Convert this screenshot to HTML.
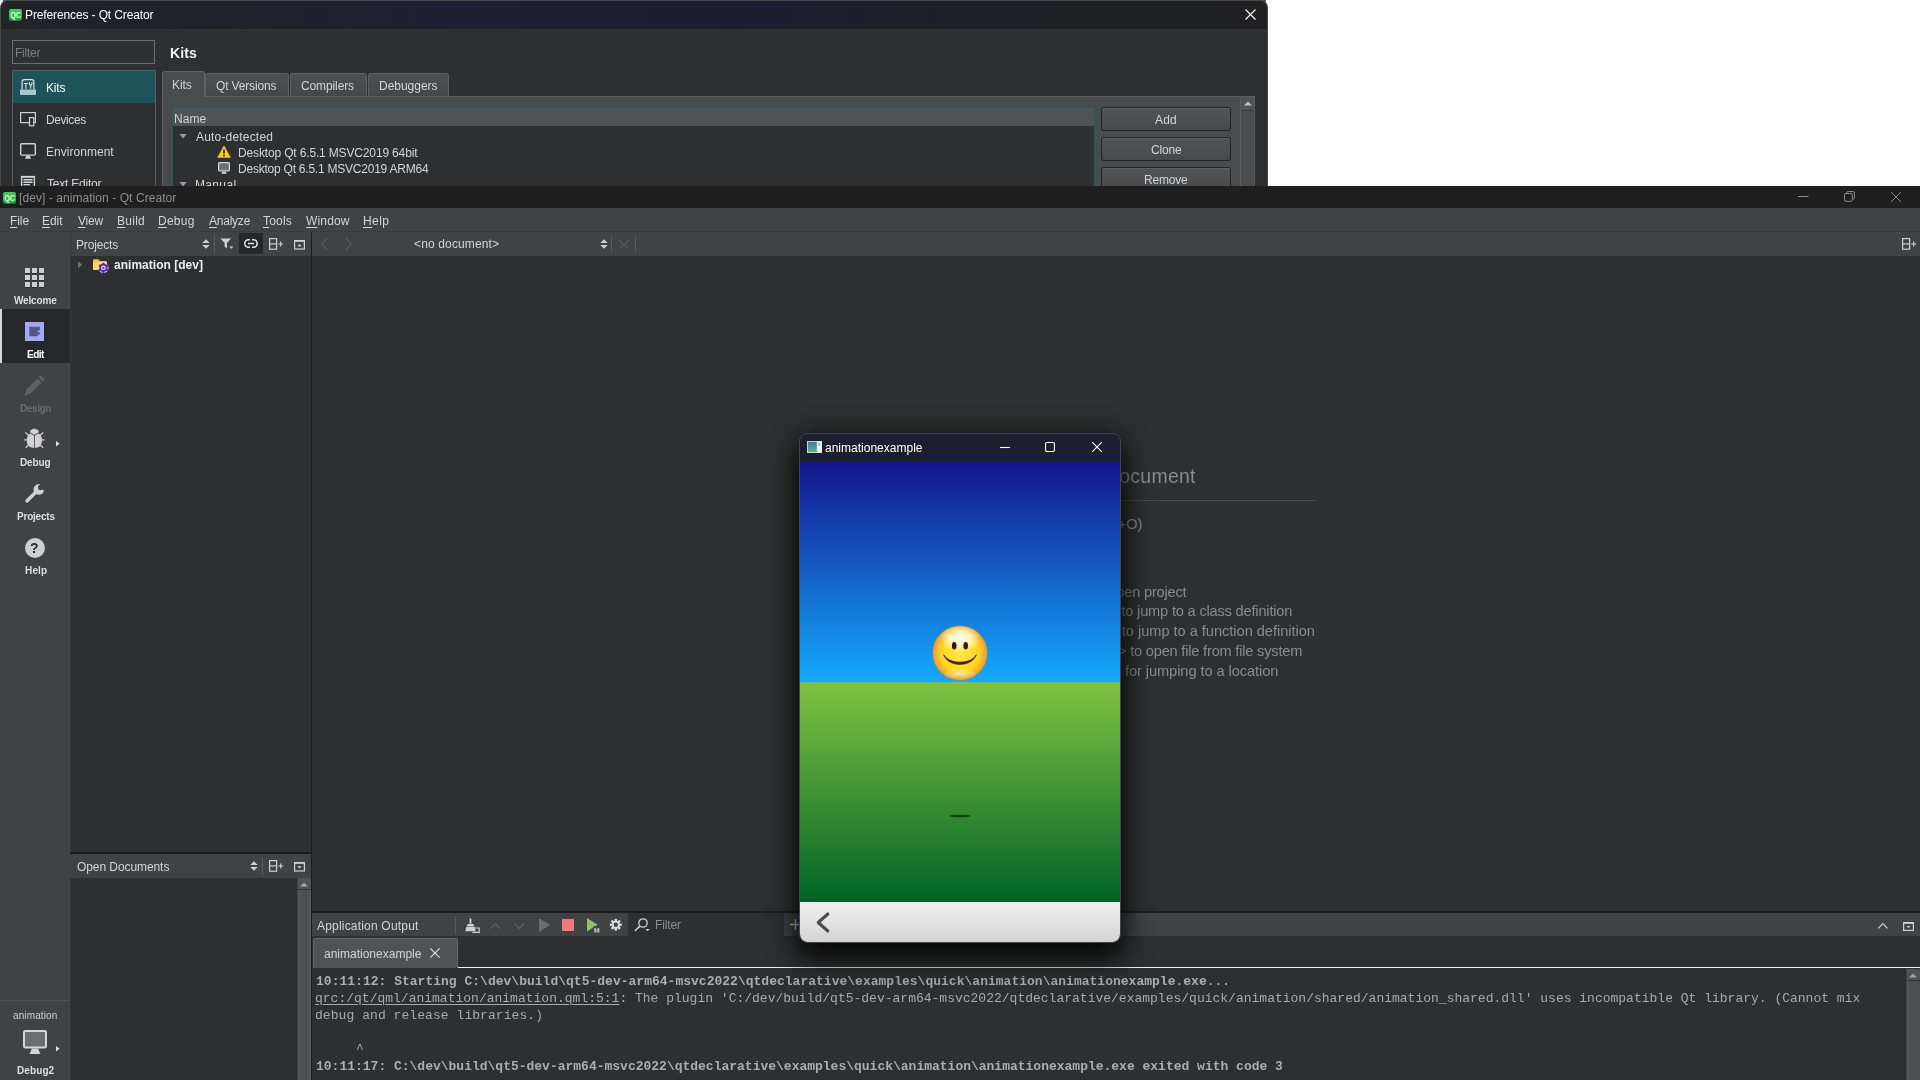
<!DOCTYPE html>
<html><head><meta charset="utf-8"><title>Qt Creator</title>
<style>
*{box-sizing:border-box;margin:0;padding:0}
html,body{width:1920px;height:1080px;overflow:hidden;background:#fff}
body{font-family:"Liberation Sans", sans-serif;font-size:12px;color:#d4d4d4;position:relative}
.a{position:absolute}
.t{position:absolute;white-space:pre;line-height:16px;height:16px;will-change:transform}
svg{position:absolute;overflow:visible}
u{text-decoration:underline;text-underline-offset:1.5px;text-decoration-thickness:1px}
</style></head><body>
<div class="a" style="left:0px;top:0px;width:1266px;height:2px;background:#4b4b4c;"></div>
<div class="a" style="left:0px;top:0px;width:3px;height:3px;background:#e8e8e8;"></div>
<div class="a" style="left:0px;top:0px;width:1268px;height:190px;background:#47484a;border-radius:8px 8px 0 0"></div>
<div class="a" style="left:1px;top:1px;width:1266px;height:189px;background:#2e2f30;border-radius:7px 7px 0 0"></div>
<div class="a" style="left:1px;top:1px;width:1266px;height:28px;background:linear-gradient(90deg,#222327 0,#1f2129 15%,#1b1f32 42%,#1b1e30 58%,#1e2025 80%,#202021 100%);border-radius:7px 7px 0 0"></div>
<div class="a" style="left:9px;top:9px;width:13px;height:11px;background:linear-gradient(#41cd52,#2aa840);border-radius:2px;box-shadow:0 1px 0 #17802b"></div>
<svg style="left:9px;top:9px" width="13" height="11" viewBox="0 0 13 11"><text x="1.2" y="9.2" font-family="Liberation Sans, sans-serif" font-weight="bold" font-size="9.6" textLength="10.8" lengthAdjust="spacingAndGlyphs" fill="#dcffe2">QC</text></svg>
<div class="t" style="left:24.80px;top:7.00px;font-size:12px;color:#ffffff;letter-spacing:-0.122px;">Preferences - Qt Creator</div>
<svg style="left:1245px;top:9px" width="11" height="11" viewBox="0 0 11 11"><path d="M0.5 0.5L10.5 10.5M10.5 0.5L0.5 10.5" stroke="#fff" stroke-width="1.1" fill="none"/></svg>
<div class="a" style="left:12px;top:40px;width:143px;height:24px;background:#6c6d6e;"></div>
<div class="a" style="left:13px;top:41px;width:141px;height:22px;background:#2e2f30;"></div>
<div class="t" style="left:14.80px;top:45.00px;font-size:12px;color:#7b7c7d;letter-spacing:-0.240px;">Filter</div>
<div class="a" style="left:12px;top:70px;width:144px;height:125px;background:#5b5c5e;"></div>
<div class="a" style="left:13px;top:71px;width:142px;height:124px;background:#2e2f30;"></div>
<div class="a" style="left:13px;top:71px;width:142px;height:32px;background:#1d545c;"></div>
<div class="t" style="left:45.70px;top:80.00px;font-size:12px;color:#ffffff;letter-spacing:-0.167px;">Kits</div>
<div class="t" style="left:45.70px;top:112.00px;font-size:12px;color:#d4d4d4;letter-spacing:-0.417px;">Devices</div>
<div class="t" style="left:45.70px;top:144.00px;font-size:12px;color:#d4d4d4;letter-spacing:0.030px;">Environment</div>
<div class="t" style="left:46.70px;top:176.00px;font-size:12px;color:#d4d4d4;letter-spacing:-0.220px;">Text Editor</div>
<svg style="left:20px;top:79px" width="16" height="16" viewBox="0 0 16 16"><rect x="0" y="10.5" width="16" height="5.5" fill="#a9c3c7"/><path d="M2.1 10.5V2.8a2.2 2.2 0 0 1 2.2-2.2h7.4a2.2 2.2 0 0 1 2.2 2.2v7.7" fill="none" stroke="#d5e6e8" stroke-width="1.2"/><path d="M3.9 4.5h4M5.9 4.5v5.2M9.4 3.1v1.7a1.3 1.3 0 0 0 2.6 0v-1.7M10.7 6.2v3.5" fill="none" stroke="#d5e6e8" stroke-width="1.1"/></svg>
<svg style="left:20px;top:112px" width="16" height="15" viewBox="0 0 16 15"><rect x="0.6" y="0.6" width="14.8" height="10" fill="none" stroke="#d0d0d0" stroke-width="1.2"/><rect x="9.5" y="5.6" width="4.3" height="8.2" fill="#2e2f30" stroke="#d0d0d0" stroke-width="1.2"/></svg>
<svg style="left:20px;top:143px" width="16" height="17" viewBox="0 0 16 17"><rect x="0.7" y="0.7" width="14.6" height="11.4" rx="1" fill="none" stroke="#d0d0d0" stroke-width="1.4"/><path d="M6.3 12.5h3.4l1.3 3.3h-6z" fill="#d0d0d0"/></svg>
<svg style="left:21px;top:176px" width="14" height="13" viewBox="0 0 14 13"><rect x="0.6" y="0.6" width="12.8" height="11" fill="none" stroke="#d6d6d6" stroke-width="1.3"/><path d="M0 0.8h14" stroke="#d6d6d6" stroke-width="1.8"/><path d="M2.4 3.8h9.2M2.4 6.2h9.2M2.4 8.6h6.5" stroke="#d6d6d6" stroke-width="1.4"/></svg>
<div class="t" style="left:169.60px;top:45.00px;font-size:14px;font-weight:bold;color:#f2f2f2;letter-spacing:0.133px;">Kits</div>
<div class="a" style="left:162px;top:96px;width:1093px;height:100px;background:#5c5d5f;"></div>
<div class="a" style="left:163px;top:97px;width:1091px;height:100px;background:#4a4b4d;"></div>
<div class="a" style="left:162px;top:71px;width:43px;height:26px;background:#626365;border-radius:3px 3px 0 0"></div>
<div class="a" style="left:163px;top:72px;width:41px;height:26px;background:#4a4b4d;border-radius:2px 2px 0 0"></div>
<div class="a" style="left:205px;top:73px;width:84px;height:23px;background:#5e5f61;border-radius:3px 3px 0 0"></div>
<div class="a" style="left:206px;top:74px;width:82px;height:22px;background:linear-gradient(#4e4f51,#454648);border-radius:2px 2px 0 0"></div>
<div class="a" style="left:290px;top:73px;width:77px;height:23px;background:#5e5f61;border-radius:3px 3px 0 0"></div>
<div class="a" style="left:291px;top:74px;width:75px;height:22px;background:linear-gradient(#4e4f51,#454648);border-radius:2px 2px 0 0"></div>
<div class="a" style="left:368px;top:73px;width:81px;height:23px;background:#5e5f61;border-radius:3px 3px 0 0"></div>
<div class="a" style="left:369px;top:74px;width:79px;height:22px;background:linear-gradient(#4e4f51,#454648);border-radius:2px 2px 0 0"></div>
<div class="t" style="left:172.30px;top:77.00px;font-size:12px;color:#d4d4d4;letter-spacing:-0.100px;">Kits</div>
<div class="t" style="left:216.30px;top:78.00px;font-size:12px;color:#d4d4d4;letter-spacing:-0.160px;">Qt Versions</div>
<div class="t" style="left:301.40px;top:78.00px;font-size:12px;color:#d4d4d4;letter-spacing:-0.112px;">Compilers</div>
<div class="t" style="left:378.50px;top:78.00px;font-size:12px;color:#d4d4d4;letter-spacing:-0.025px;">Debuggers</div>
<div class="a" style="left:172px;top:107px;width:923px;height:90px;background:#1f5c64;"></div>
<div class="a" style="left:173px;top:108px;width:921px;height:90px;background:#2e2f30;"></div>
<div class="a" style="left:173px;top:108px;width:921px;height:18px;background:#515254;"></div>
<div class="t" style="left:174.30px;top:111.00px;font-size:12px;color:#d4d4d4;letter-spacing:0.033px;">Name</div>
<div class="t" style="left:196.30px;top:129.00px;font-size:12px;color:#d4d4d4;letter-spacing:0.183px;">Auto-detected</div>
<div class="t" style="left:237.60px;top:145.00px;font-size:12px;color:#d4d4d4;letter-spacing:-0.153px;">Desktop Qt 6.5.1 MSVC2019 64bit</div>
<div class="t" style="left:237.60px;top:161.00px;font-size:12px;color:#d4d4d4;letter-spacing:-0.227px;">Desktop Qt 6.5.1 MSVC2019 ARM64</div>
<div class="t" style="left:195.30px;top:177.00px;font-size:12px;color:#d4d4d4;letter-spacing:0.340px;">Manual</div>
<svg style="left:179px;top:134px" width="8" height="5" viewBox="0 0 8 5"><path d="M0.3 0h7.4L4 4.6z" fill="#9a9b9c"/></svg>
<svg style="left:179px;top:182px" width="8" height="5" viewBox="0 0 8 5"><path d="M0.3 0h7.4L4 4.6z" fill="#9a9b9c"/></svg>
<svg style="left:217px;top:145px" width="14" height="13" viewBox="0 0 14 13"><path d="M7 0.8L13.4 12.4H0.6z" fill="#f5cf2e" stroke="#e0b400" stroke-width="0.8" stroke-linejoin="round"/><path d="M7 4.4v4.2" stroke="#33260a" stroke-width="1.7"/><circle cx="7" cy="10.5" r="0.95" fill="#33260a"/></svg>
<svg style="left:218px;top:162px" width="12" height="12" viewBox="0 0 12 12"><rect x="0.6" y="0.6" width="10.8" height="8.2" rx="0.8" fill="#6e6f71" stroke="#d2d2d2" stroke-width="1.2"/><path d="M4.6 9.4h2.8l1.4 2.4h-5.6z" fill="#d2d2d2"/></svg>
<div class="a" style="left:1101px;top:107px;width:130px;height:24px;background:#242526;border-radius:3px"></div>
<div class="a" style="left:1102px;top:108px;width:128px;height:22px;background:linear-gradient(#525355,#48494b);border-radius:2px;box-shadow:inset 0 1px 0 #5f6062"></div>
<div class="t" style="left:1155.30px;top:112.00px;font-size:12px;color:#d4d4d4;letter-spacing:0.200px;">Add</div>
<div class="a" style="left:1101px;top:137px;width:130px;height:24px;background:#242526;border-radius:3px"></div>
<div class="a" style="left:1102px;top:138px;width:128px;height:22px;background:linear-gradient(#525355,#48494b);border-radius:2px;box-shadow:inset 0 1px 0 #5f6062"></div>
<div class="t" style="left:1150.80px;top:142.00px;font-size:12px;color:#d4d4d4;letter-spacing:-0.200px;">Clone</div>
<div class="a" style="left:1101px;top:167px;width:130px;height:24px;background:#242526;border-radius:3px"></div>
<div class="a" style="left:1102px;top:168px;width:128px;height:22px;background:linear-gradient(#525355,#48494b);border-radius:2px;box-shadow:inset 0 1px 0 #5f6062"></div>
<div class="t" style="left:1144.00px;top:172.00px;font-size:12px;color:#d4d4d4;letter-spacing:-0.200px;">Remove</div>
<div class="a" style="left:1240px;top:97px;width:15px;height:100px;background:#4c4d4f;border-left:1px solid #5c5d5f;border-right:1px solid #5a5b5d"></div>
<div class="a" style="left:1241px;top:97px;width:13px;height:14px;background:#525355;border-bottom:1px solid #38393b"></div>
<svg style="left:1243.5px;top:101px" width="8" height="5" viewBox="0 0 8 5"><path d="M0 4.6L4 0.4L8 4.6z" fill="#c2c2c2"/></svg>
<div class="a" style="left:0px;top:186px;width:1920px;height:894px;background:#2e2f30;"></div>
<div class="a" style="left:0px;top:186px;width:1920px;height:22px;background:#1f1f1f;"></div>
<div class="a" style="left:3px;top:192px;width:13px;height:11px;background:linear-gradient(#41cd52,#2aa840);border-radius:2px;box-shadow:0 1px 0 #17802b"></div>
<svg style="left:3px;top:192px" width="13" height="11" viewBox="0 0 13 11"><text x="1.2" y="9.2" font-family="Liberation Sans, sans-serif" font-weight="bold" font-size="9.6" textLength="10.8" lengthAdjust="spacingAndGlyphs" fill="#dcffe2">QC</text></svg>
<div class="t" style="left:18.80px;top:190.00px;font-size:12px;color:#8d8d8d;letter-spacing:0.066px;">[dev] - animation - Qt Creator</div>
<svg style="left:1798px;top:196px" width="11" height="1" viewBox="0 0 11 1"><path d="M0 0.5h10.5" stroke="#8a8a8a" stroke-width="1"/></svg>
<svg style="left:1844px;top:191px" width="11" height="11" viewBox="0 0 11 11"><rect x="0.5" y="2.5" width="7.8" height="7.8" rx="1.6" fill="none" stroke="#8a8a8a" stroke-width="1"/><path d="M2.6 2.4v-0.3a1.6 1.6 0 0 1 1.6-1.6h4.6a1.6 1.6 0 0 1 1.6 1.6v4.6a1.6 1.6 0 0 1-1.6 1.6h-0.4" fill="none" stroke="#8a8a8a" stroke-width="1"/></svg>
<svg style="left:1890.5px;top:191.5px" width="10" height="10" viewBox="0 0 10 10"><path d="M0 0L10 10M10 0L0 10" stroke="#8a8a8a" stroke-width="1" fill="none"/></svg>
<div class="a" style="left:0px;top:208px;width:1920px;height:24px;background:#404244;"></div>
<div class="a" style="left:0px;top:231px;width:1920px;height:1px;background:#3a3b3d;"></div>
<div class="t" style="left:10.00px;top:213.00px;font-size:12px;color:#d4d4d4;letter-spacing:-0.067px;"><u>F</u>ile</div>
<div class="t" style="left:42.30px;top:213.00px;font-size:12px;color:#d4d4d4;letter-spacing:-0.067px;"><u>E</u>dit</div>
<div class="t" style="left:78.10px;top:213.00px;font-size:12px;color:#d4d4d4;letter-spacing:-0.200px;"><u>V</u>iew</div>
<div class="t" style="left:117.30px;top:213.00px;font-size:12px;color:#d4d4d4;letter-spacing:0.275px;"><u>B</u>uild</div>
<div class="t" style="left:158.40px;top:213.00px;font-size:12px;color:#d4d4d4;letter-spacing:0.250px;"><u>D</u>ebug</div>
<div class="t" style="left:209.00px;top:213.00px;font-size:12px;color:#d4d4d4;letter-spacing:-0.233px;"><u>A</u>nalyze</div>
<div class="t" style="left:263.00px;top:213.00px;font-size:12px;color:#d4d4d4;letter-spacing:0.175px;"><u>T</u>ools</div>
<div class="t" style="left:305.80px;top:213.00px;font-size:12px;color:#d4d4d4;letter-spacing:0.160px;"><u>W</u>indow</div>
<div class="t" style="left:363.20px;top:213.00px;font-size:12px;color:#d4d4d4;letter-spacing:0.433px;"><u>H</u>elp</div>
<div class="a" style="left:0px;top:232px;width:1920px;height:24px;background:#404244;"></div>
<div class="a" style="left:0px;top:232px;width:70px;height:848px;background:#404244;"></div>
<div class="a" style="left:70px;top:232px;width:1px;height:848px;background:#37383a;"></div>
<div class="a" style="left:0px;top:309px;width:70px;height:54px;background:#262728;"></div>
<div class="a" style="left:0px;top:309px;width:2px;height:54px;background:#d6d6d6;"></div>
<svg style="left:25px;top:267.5px" width="19" height="19" viewBox="0 0 19 19"><g transform="translate(0,1)" opacity="0.5"><rect x="0" y="0" width="5" height="5" fill="#1a1a1a"/><rect x="0" y="7" width="5" height="5" fill="#1a1a1a"/><rect x="0" y="14" width="5" height="5" fill="#1a1a1a"/><rect x="7" y="0" width="5" height="5" fill="#1a1a1a"/><rect x="7" y="7" width="5" height="5" fill="#1a1a1a"/><rect x="7" y="14" width="5" height="5" fill="#1a1a1a"/><rect x="14" y="0" width="5" height="5" fill="#1a1a1a"/><rect x="14" y="7" width="5" height="5" fill="#1a1a1a"/><rect x="14" y="14" width="5" height="5" fill="#1a1a1a"/></g><rect x="0" y="0" width="5" height="5" fill="#cfcfcf"/><rect x="0" y="7" width="5" height="5" fill="#cfcfcf"/><rect x="0" y="14" width="5" height="5" fill="#cfcfcf"/><rect x="7" y="0" width="5" height="5" fill="#cfcfcf"/><rect x="7" y="7" width="5" height="5" fill="#cfcfcf"/><rect x="7" y="14" width="5" height="5" fill="#cfcfcf"/><rect x="14" y="0" width="5" height="5" fill="#cfcfcf"/><rect x="14" y="7" width="5" height="5" fill="#cfcfcf"/><rect x="14" y="14" width="5" height="5" fill="#cfcfcf"/></svg>
<div class="t" style="left:13.50px;top:293.00px;font-size:10px;font-weight:bold;color:#dedede;letter-spacing:-0.167px;">Welcome</div>
<svg style="left:25px;top:321.5px" width="19" height="19" viewBox="0 0 19 19"><rect x="0" y="0" width="19" height="19" fill="#a2a8f5"/><path d="M4.3 4.8H14.8V8.6H12.8V10.3H14.8V12.4H12.8V14.2H4.3z" fill="#52578a"/></svg>
<div class="t" style="left:26.50px;top:347.00px;font-size:10px;font-weight:bold;color:#ffffff;letter-spacing:-0.500px;">Edit</div>
<svg style="left:24px;top:376px" width="20" height="20" viewBox="0 0 20 20"><path d="M0.6 19.4l1.6-5.6L13.6 2.4l4 4L6.2 17.8z" fill="#606163"/><path d="M14.6 1.4l1.2-1.2a1 1 0 0 1 1.4 0l2.6 2.6a1 1 0 0 1 0 1.4l-1.2 1.2z" fill="#606163"/></svg>
<div class="t" style="left:19.50px;top:401.00px;font-size:10px;font-weight:bold;color:#6b6c6e;letter-spacing:-0.400px;">Design</div>
<svg style="left:24px;top:428px" width="21" height="21" viewBox="0 0 21 21"><g stroke="#cfcfcf" stroke-width="1.3" fill="none"><path d="M4.6 7.2L1.4 4.6M2.9 11.8H0.2M4.4 17.2L1.6 19.8M16.2 7.2l3.2-2.6M17.9 11.8h2.7M16.4 17.2l2.8 2.6"/></g><path d="M10.4 0.8l3.9 1.7v2l-3.9 2-3.9-2v-2z" fill="#d2d2d2" stroke="#d2d2d2" stroke-width="0.6" stroke-linejoin="round"/><path d="M10 7.4L6.1 5.4C4.3 6.3 2.9 8.7 2.7 11.6C2.6 15.2 4 18.1 6.5 19.3L10 20.1z" fill="#d2d2d2"/><path d="M10.8 7.4l3.9-2c1.8 0.9 3.2 3.3 3.4 6.2c0.1 3.6-1.3 6.5-3.8 7.7l-3.5 0.8z" fill="#d2d2d2"/></svg>
<svg style="left:56px;top:441px" width="4" height="6" viewBox="0 0 4 6"><path d="M0 0l3.6 2.8L0 5.6z" fill="#e0e0e0"/></svg>
<div class="t" style="left:19.50px;top:455.00px;font-size:10px;font-weight:bold;color:#dedede;letter-spacing:-0.125px;">Debug</div>
<svg style="left:24px;top:483px" width="22" height="22" viewBox="0 0 22 22"><g opacity="0.45" transform="translate(0,1.2)"><path d="M3 18L13 8" stroke="#1a1a1a" stroke-width="3.7" stroke-linecap="round"/></g><path d="M3 18L13 8" stroke="#d0d0d0" stroke-width="3.7" stroke-linecap="round" fill="none"/><circle cx="14.8" cy="6.4" r="5.3" fill="#d0d0d0"/><circle cx="16.7" cy="4.5" r="2.7" fill="#404244"/><path d="M14.8 2.6l5.7 5.7 4-4-5.7-5.7z" fill="#404244"/></svg>
<div class="t" style="left:16.50px;top:509.00px;font-size:10px;font-weight:bold;color:#dedede;letter-spacing:-0.214px;">Projects</div>
<svg style="left:25px;top:538px" width="20" height="20" viewBox="0 0 20 20"><circle cx="10" cy="10" r="10" fill="#cfcfcf"/></svg>
<div class="t" style="left:30.20px;top:540.00px;font-size:14px;font-weight:bold;color:#2a2b2c;letter-spacing:0.400px;">?</div>
<div class="t" style="left:24.50px;top:563.00px;font-size:10px;font-weight:bold;color:#dedede;letter-spacing:0.167px;">Help</div>
<div class="a" style="left:0px;top:1000px;width:70px;height:1px;background:#505153;"></div>
<div class="t" style="left:13.00px;top:1008.00px;font-size:10px;color:#d0d0d0;letter-spacing:0.125px;">animation</div>
<svg style="left:23px;top:1030px" width="24" height="25" viewBox="0 0 24 25"><rect x="1" y="1" width="22" height="16.5" rx="1.2" fill="#6d6e70" stroke="#d6d6d6" stroke-width="2"/><path d="M9 18.5h6l2.5 5.5h-11z" fill="#d6d6d6"/></svg>
<svg style="left:56px;top:1046px" width="4" height="6" viewBox="0 0 4 6"><path d="M0 0l3.6 2.8L0 5.6z" fill="#e0e0e0"/></svg>
<div class="t" style="left:16.50px;top:1063.00px;font-size:10px;font-weight:bold;color:#dedede;letter-spacing:0.100px;">Debug2</div>
<div class="t" style="left:75.50px;top:237.00px;font-size:12px;color:#d4d4d4;letter-spacing:-0.171px;">Projects</div>
<svg style="left:202px;top:238.5px" width="8" height="10" viewBox="0 0 8 10"><path d="M0.3 3.9L4 0.2L7.7 3.9zM0.3 6.1L4 9.8L7.7 6.1z" fill="#d0d0d0"/></svg>
<div class="a" style="left:214px;top:235px;width:1px;height:18px;background:#58595b;"></div>
<svg style="left:220px;top:238px" width="14" height="12" viewBox="0 0 14 12"><path d="M0.4 0.4h10.6L7 5v5.2l-2.4-1.4V5z" fill="#d0d0d0"/><path d="M9.4 8.6h4L11.4 10.8z" fill="#d0d0d0"/></svg>
<div class="a" style="left:239px;top:233px;width:24px;height:21px;background:#262728;"></div>
<svg style="left:244px;top:239px" width="14" height="9" viewBox="0 0 14 9"><path d="M6 0.8H4.5a3.7 3.7 0 0 0 0 7.4H6M8 0.8h1.5a3.7 3.7 0 0 1 0 7.4H8M4 4.5h6" fill="none" stroke="#e4e4e4" stroke-width="1.5"/></svg>
<svg style="left:269px;top:238.2px" width="15" height="12" viewBox="0 0 15 12"><rect x="0.6" y="0.6" width="7" height="10.6" fill="none" stroke="#d0d0d0" stroke-width="1.2"/><path d="M0.6 5.9h7" stroke="#d0d0d0" stroke-width="1.2"/><path d="M9.2 6h5M11.7 3.5v5" stroke="#d0d0d0" stroke-width="1.2"/></svg>
<svg style="left:294px;top:240.3px" width="11" height="10" viewBox="0 0 11 10"><rect x="0.6" y="0.6" width="9.8" height="8.4" fill="none" stroke="#d0d0d0" stroke-width="1.2"/><path d="M0.6 1h9.8" stroke="#d0d0d0" stroke-width="1.6"/><path d="M3.3 6.2L5.5 4l2.2 2.2z" fill="#d0d0d0"/></svg>
<svg style="left:78px;top:261px" width="5" height="8" viewBox="0 0 5 8"><path d="M0 0.2L4.2 3.7L0 7.2z" fill="#707173"/></svg>
<svg style="left:93px;top:258.5px" width="15" height="13" viewBox="0 0 15 13"><path d="M0 1.2a1 1 0 0 1 1-1h4.2l1.6 1.8H13a1 1 0 0 1 1 1V10a1 1 0 0 1-1 1H1a1 1 0 0 1-1-1z" fill="#f3c544"/><path d="M0 3.4h14V10a1 1 0 0 1-1 1H1a1 1 0 0 1-1-1z" fill="#fbd866"/><circle cx="10.4" cy="8.8" r="5.2" fill="#e4d8ff" opacity="0.9"/><g transform="translate(10.4,8.8)" fill="#5b21c4"><rect x="-1.1" y="-5" width="2.2" height="2" transform="rotate(0)"/><rect x="-1.1" y="-5" width="2.2" height="2" transform="rotate(60)"/><rect x="-1.1" y="-5" width="2.2" height="2" transform="rotate(120)"/><rect x="-1.1" y="-5" width="2.2" height="2" transform="rotate(180)"/><rect x="-1.1" y="-5" width="2.2" height="2" transform="rotate(240)"/><rect x="-1.1" y="-5" width="2.2" height="2" transform="rotate(300)"/><circle r="4" /></g><circle cx="10.4" cy="8.8" r="2.3" fill="#f1eaff"/><circle cx="10.4" cy="8.8" r="1.1" fill="#5b21c4"/></svg>
<div class="t" style="left:114.20px;top:257.00px;font-size:12px;font-weight:bold;color:#ececec;letter-spacing:0.021px;">animation [dev]</div>
<div class="a" style="left:311px;top:232px;width:1px;height:848px;background:#1b1c1d;"></div>
<div class="a" style="left:70px;top:852px;width:241px;height:2px;background:#1b1c1d;"></div>
<div class="a" style="left:70px;top:854px;width:241px;height:24px;background:#404244;"></div>
<div class="t" style="left:76.50px;top:859.00px;font-size:12px;color:#d4d4d4;letter-spacing:-0.077px;">Open Documents</div>
<svg style="left:250px;top:860.5px" width="8" height="10" viewBox="0 0 8 10"><path d="M0.3 3.9L4 0.2L7.7 3.9zM0.3 6.1L4 9.8L7.7 6.1z" fill="#d0d0d0"/></svg>
<div class="a" style="left:262px;top:857px;width:1px;height:18px;background:#58595b;"></div>
<svg style="left:269px;top:860.3px" width="15" height="12" viewBox="0 0 15 12"><rect x="0.6" y="0.6" width="7" height="10.6" fill="none" stroke="#d0d0d0" stroke-width="1.2"/><path d="M0.6 5.9h7" stroke="#d0d0d0" stroke-width="1.2"/><path d="M9.2 6h5M11.7 3.5v5" stroke="#d0d0d0" stroke-width="1.2"/></svg>
<svg style="left:294px;top:862.2px" width="11" height="10" viewBox="0 0 11 10"><rect x="0.6" y="0.6" width="9.8" height="8.4" fill="none" stroke="#d0d0d0" stroke-width="1.2"/><path d="M0.6 1h9.8" stroke="#d0d0d0" stroke-width="1.6"/><path d="M3.3 4.2L5.5 6.4l2.2-2.2z" fill="#d0d0d0"/></svg>
<div class="a" style="left:297px;top:878px;width:14px;height:202px;background:linear-gradient(90deg,#2c2d2e 0,#58595b 8%,#4d4e50 30%,#4d4e50 80%,#5a5b5d 100%);"></div>
<div class="a" style="left:298px;top:878px;width:13px;height:12px;background:#515254;border-bottom:1px solid #343536"></div>
<svg style="left:300px;top:881.7px" width="8" height="5" viewBox="0 0 8 5"><path d="M0 4.6L4 0.4L8 4.6z" fill="#a2a3a4"/></svg>
<svg style="left:321px;top:237.5px" width="7" height="12" viewBox="0 0 7 12"><path d="M6.3 0.3L0.6 6l5.7 5.7" fill="none" stroke="#5c5d5f" stroke-width="1.2"/></svg>
<svg style="left:344.5px;top:237.5px" width="7" height="12" viewBox="0 0 7 12"><path d="M0.7 0.3L6.4 6l-5.7 5.7" fill="none" stroke="#5c5d5f" stroke-width="1.2"/></svg>
<div class="t" style="left:414.20px;top:236.00px;font-size:12px;color:#d4d4d4;letter-spacing:0.142px;">&lt;no document&gt;</div>
<svg style="left:599.5px;top:238.5px" width="8" height="10" viewBox="0 0 8 10"><path d="M0.3 3.9L4 0.2L7.7 3.9zM0.3 6.1L4 9.8L7.7 6.1z" fill="#d0d0d0"/></svg>
<div class="a" style="left:611px;top:235px;width:1px;height:18px;background:#58595b;"></div>
<svg style="left:619px;top:239.5px" width="10" height="9" viewBox="0 0 10 9"><path d="M0.3 0.3L9.7 8.7M9.7 0.3L0.3 8.7" stroke="#5c5d5f" stroke-width="1.1" fill="none"/></svg>
<div class="a" style="left:635px;top:235px;width:1px;height:18px;background:#58595b;"></div>
<svg style="left:1901.8px;top:238.2px" width="15" height="12" viewBox="0 0 15 12"><rect x="0.6" y="0.6" width="7" height="10.6" fill="none" stroke="#d0d0d0" stroke-width="1.2"/><path d="M0.6 5.9h7" stroke="#d0d0d0" stroke-width="1.2"/><path d="M9.2 6h5M11.7 3.5v5" stroke="#d0d0d0" stroke-width="1.2"/></svg>
<div class="a" style="left:312px;top:911px;width:1608px;height:2px;background:#1b1c1d;"></div>
<div class="a" style="left:312px;top:913px;width:1608px;height:24px;background:#404244;"></div>
<div class="a" style="left:312px;top:936px;width:1608px;height:1px;background:#2b2c2d;"></div>
<div class="a" style="left:628px;top:913px;width:156px;height:24px;background:#2e2f30;"></div>
<div class="t" style="left:317.00px;top:918.00px;font-size:12px;color:#d4d4d4;letter-spacing:0.194px;">Application Output</div>
<div class="a" style="left:455px;top:916px;width:1px;height:18px;background:#58595b;"></div>
<svg style="left:465px;top:917.5px" width="15" height="15" viewBox="0 0 15 15"><path d="M4.6 0.4h1.8v5.2h-1.8z" fill="#d0d0d0"/><path d="M2.6 6h5.8l0.6 2h-7z" fill="#d0d0d0"/><path d="M1.6 8.6h7.8l1.4 4.6H0.2z" fill="#d0d0d0"/><path d="M8.4 10h5.8v4.4H7.4" fill="none" stroke="#d0d0d0" stroke-width="1.2"/></svg>
<svg style="left:490.4px;top:922.6px" width="11" height="6" viewBox="0 0 11 6"><path d="M0.4 5.6L5.2 0.7L10 5.6" fill="none" stroke="#606163" stroke-width="1.2"/></svg>
<svg style="left:513.8px;top:922.6px" width="11" height="6" viewBox="0 0 11 6"><path d="M0.4 0.4L5.2 5.3L10 0.4" fill="none" stroke="#606163" stroke-width="1.2"/></svg>
<svg style="left:539px;top:918px" width="11" height="14" viewBox="0 0 11 14"><path d="M0 0L11 7L0 14z" fill="#6c6d6f"/></svg>
<div class="a" style="left:562px;top:919px;width:12px;height:12px;background:#ee7a7a;"></div>
<svg style="left:587px;top:918px" width="13" height="15" viewBox="0 0 13 15"><path d="M0 0L10.6 6.8L0 13.6z" fill="#8fc45e"/><rect x="6.2" y="8.4" width="6.6" height="6.2" fill="#404244"/><path d="M7.2 14.4v-3.6a1.2 1.2 0 0 1 2.2 0v3.6zM10.2 14.4v-3.6a1.2 1.2 0 0 1 2.2 0v3.6z" fill="#b9babb"/></svg>
<svg style="left:610px;top:919px" width="12" height="12" viewBox="0 0 12 12"><g transform="translate(5.8,5.8)" fill="#dadada"><rect x="-1.2" y="-5.9" width="2.4" height="3" transform="rotate(0)" /><rect x="-1.2" y="-5.9" width="2.4" height="3" transform="rotate(45)" /><rect x="-1.2" y="-5.9" width="2.4" height="3" transform="rotate(90)" /><rect x="-1.2" y="-5.9" width="2.4" height="3" transform="rotate(135)" /><rect x="-1.2" y="-5.9" width="2.4" height="3" transform="rotate(180)" /><rect x="-1.2" y="-5.9" width="2.4" height="3" transform="rotate(225)" /><rect x="-1.2" y="-5.9" width="2.4" height="3" transform="rotate(270)" /><rect x="-1.2" y="-5.9" width="2.4" height="3" transform="rotate(315)" /></g><circle cx="5.8" cy="5.8" r="3.1" fill="none" stroke="#dadada" stroke-width="1.8"/></svg>
<svg style="left:634px;top:918px" width="16" height="14" viewBox="0 0 16 14"><circle cx="9" cy="5" r="4.2" fill="none" stroke="#d0d0d0" stroke-width="1.3"/><path d="M6 8.2L0.8 13" stroke="#d0d0d0" stroke-width="1.6"/><path d="M11.6 11h4l-2 2.2z" fill="#d0d0d0"/></svg>
<div class="t" style="left:654.60px;top:917.00px;font-size:12px;color:#8b8c8d;letter-spacing:-0.120px;">Filter</div>
<svg style="left:790px;top:919px" width="11" height="11" viewBox="0 0 11 11"><path d="M0 5.5h11M5.5 0v11" stroke="#c2c2c2" stroke-width="1.5"/></svg>
<svg style="left:1878.4px;top:923px" width="10" height="6" viewBox="0 0 10 6"><path d="M0.3 5.3L4.9 0.6L9.5 5.3" fill="none" stroke="#d0d0d0" stroke-width="1.2"/></svg>
<svg style="left:1903px;top:921.5px" width="11" height="9" viewBox="0 0 11 9"><rect x="0.6" y="0.6" width="9.8" height="7.8" fill="none" stroke="#d0d0d0" stroke-width="1.2"/><path d="M0.6 1h9.8" stroke="#d0d0d0" stroke-width="1.6"/><path d="M3.5 4L5.5 6l2-2z" fill="#d0d0d0"/></svg>
<div class="a" style="left:313px;top:938px;width:145px;height:30px;background:#636466;border-radius:2px 2px 0 0"></div>
<div class="a" style="left:314px;top:939px;width:143px;height:29px;background:#515254;border-radius:1px 1px 0 0"></div>
<div class="t" style="left:324.30px;top:946.00px;font-size:12px;color:#d4d4d4;letter-spacing:0.000px;">animationexample</div>
<svg style="left:429.5px;top:948px" width="10" height="10" viewBox="0 0 10 10"><path d="M0.3 0.3L9.7 9.7M9.7 0.3L0.3 9.7" stroke="#e0e0e0" stroke-width="1.1" fill="none"/></svg>
<div class="a" style="left:458px;top:967px;width:1462px;height:1px;background:#f2f2f2;"></div>
<div class="a" style="left:1906px;top:969px;width:14px;height:111px;background:linear-gradient(90deg,#2c2d2e 0,#58595b 8%,#4d4e50 30%,#4d4e50 100%);"></div>
<div class="a" style="left:1907px;top:969px;width:13px;height:12px;background:#515254;border-bottom:1px solid #343536"></div>
<svg style="left:1909px;top:972.5px" width="8" height="5" viewBox="0 0 8 5"><path d="M0 4.6L4 0.4L8 4.6z" fill="#a2a3a4"/></svg>
<div class="t" style="left:315.90px;top:974.00px;font-size:13px;font-weight:bold;font-family:'Liberation Mono', monospace;color:#adadad;letter-spacing:0.012px;">10:11:12: Starting C:\dev\build\qt5-dev-arm64-msvc2022\qtdeclarative\examples\quick\animation\animationexample.exe...</div>
<div class="t" style="left:315.10px;top:991.00px;font-size:13px;font-family:'Liberation Mono', monospace;color:#a9a9a9;letter-spacing:0.003px;"><u>qrc:/qt/qml/animation/animation.qml:5:1</u>: The plugin &#x27;C:/dev/build/qt5-dev-arm64-msvc2022/qtdeclarative/examples/quick/animation/shared/animation_shared.dll&#x27; uses incompatible Qt library. (Cannot mix</div>
<div class="t" style="left:315.10px;top:1008.00px;font-size:13px;font-family:'Liberation Mono', monospace;color:#a9a9a9;letter-spacing:0.061px;">debug and release libraries.)</div>
<div class="t" style="left:355.60px;top:1042.00px;font-size:13px;font-family:'Liberation Mono', monospace;color:#a9a9a9;letter-spacing:0.000px;">^</div>
<div class="t" style="left:315.90px;top:1059.00px;font-size:13px;font-weight:bold;font-family:'Liberation Mono', monospace;color:#adadad;letter-spacing:-0.004px;">10:11:17: C:\dev\build\qt5-dev-arm64-msvc2022\qtdeclarative\examples\quick\animation\animationexample.exe exited with code 3</div>
<div class="t" style="right:724.46px;top:468.00px;font-size:19.5px;color:#8a8b8c;letter-spacing:0.250px;">Open a document</div>
<div class="a" style="left:940px;top:500px;width:376px;height:1px;background:#48494b;"></div>
<div class="t" style="right:777.79px;top:516.00px;font-size:14.6px;color:#8a8b8c;letter-spacing:0.000px;">• File &gt; Open File or Project (Ctrl+O)</div>
<div class="t" style="right:733.91px;top:584.00px;font-size:14.6px;color:#8a8b8c;letter-spacing:-0.200px;">    - type to open file from any open project</div>
<div class="t" style="right:627.65px;top:603.00px;font-size:14.6px;color:#8a8b8c;letter-spacing:-0.179px;">    - type c&lt;space&gt;&lt;pattern&gt; to jump to a class definition</div>
<div class="t" style="right:605.33px;top:623.00px;font-size:14.6px;color:#8a8b8c;letter-spacing:-0.023px;">    - type m&lt;space&gt;&lt;pattern&gt; to jump to a function definition</div>
<div class="t" style="right:618.07px;top:643.00px;font-size:14.6px;color:#8a8b8c;letter-spacing:-0.196px;">    - type f&lt;space&gt;&lt;filename&gt; to open file from file system</div>
<div class="t" style="right:641.82px;top:663.00px;font-size:14.6px;color:#8a8b8c;letter-spacing:-0.067px;">    - select one of the other filters for jumping to a location</div>
<div class="a" style="left:800px;top:434px;width:320px;height:508px;background:#1c1f30;border-radius:8px;box-shadow:0 0 0 1px rgba(70,74,90,.9),0 18px 30px 2px rgba(0,0,0,.72),0 2px 24px 4px rgba(0,0,0,.5)"></div>
<div class="a" style="left:800px;top:434px;width:320px;height:508px;border-radius:8px;overflow:hidden"><div class="a" style="left:0;top:0;width:320px;height:28px;background:#1c1f30"></div><div class="a" style="left:0;top:28px;width:320px;height:220px;background:linear-gradient(#14148c,#14aaff)"></div><div class="a" style="left:0;top:248px;width:320px;height:220px;background:linear-gradient(#80c342,#006325)"></div><div class="a" style="left:0;top:468px;width:320px;height:40px;background:linear-gradient(#ffffff 0,#ededed 4%,#e4e4e4 50%,#d3d3d3 100%)"></div></div>
<svg style="left:807px;top:441px" width="15" height="12" viewBox="0 0 15 12"><defs><linearGradient id="ai" x1="0" y1="0" x2="0" y2="1"><stop offset="0" stop-color="#3a7fa0"/><stop offset="1" stop-color="#5fb58a"/></linearGradient></defs><rect width="15" height="12" fill="#d8e4e0"/><rect x="0.8" y="0.8" width="9" height="10.4" fill="url(#ai)"/><rect x="10.6" y="0.8" width="3.6" height="10.4" fill="#eef3f1"/><rect x="11.6" y="1.6" width="1.2" height="3.4" fill="#7aa6a0"/></svg>
<div class="t" style="left:825.40px;top:440.00px;font-size:12px;color:#ffffff;letter-spacing:0.007px;">animationexample</div>
<svg style="left:999.5px;top:446.5px" width="10" height="1" viewBox="0 0 10 1"><path d="M0 0.5h10" stroke="#fff" stroke-width="1.1"/></svg>
<svg style="left:1045px;top:442.2px" width="10" height="10" viewBox="0 0 10 10"><rect x="0.55" y="0.55" width="8.9" height="8.9" rx="1.2" fill="none" stroke="#fff" stroke-width="1.1"/></svg>
<svg style="left:1091.6px;top:442.2px" width="10" height="10" viewBox="0 0 10 10"><path d="M0.2 0.2L9.8 9.8M9.8 0.2L0.2 9.8" stroke="#fff" stroke-width="1.1" fill="none"/></svg>
<svg style="left:932px;top:625px" width="56" height="56" viewBox="0 0 56 56"><defs>
<radialGradient id="sf" cx="0.5" cy="0.5" r="0.5"><stop offset="0" stop-color="#ffe94a"/><stop offset="0.68" stop-color="#ffd81f"/><stop offset="0.86" stop-color="#fbb52c"/><stop offset="1" stop-color="#ee9820"/></radialGradient>
<radialGradient id="sh" cx="0.5" cy="0.42" r="0.5"><stop offset="0" stop-color="#fff" stop-opacity="1"/><stop offset="0.55" stop-color="#fffbe0" stop-opacity="0.75"/><stop offset="1" stop-color="#fff6c0" stop-opacity="0"/></radialGradient>
<radialGradient id="sb" cx="0.5" cy="0.5" r="0.5"><stop offset="0" stop-color="#fff0c0" stop-opacity="0.85"/><stop offset="1" stop-color="#ffe9a0" stop-opacity="0"/></radialGradient>
</defs>
<circle cx="28" cy="28" r="27.3" fill="url(#sf)"/>
<ellipse cx="28" cy="15.5" rx="21" ry="14" fill="url(#sh)"/>
<ellipse cx="28" cy="48.5" rx="17" ry="5.5" fill="url(#sb)"/>
<ellipse cx="22.2" cy="20.7" rx="2.3" ry="3.8" fill="#2a1700"/><ellipse cx="33.7" cy="20.7" rx="2.3" ry="3.8" fill="#2a1700"/>
<path d="M11.7 29.8C16 42.6 40 42.6 44.3 29.8C39 39.6 17 39.6 11.7 29.8z" fill="#4a1a00" stroke="#4a1a00" stroke-width="0.7" stroke-linejoin="round"/></svg>
<svg style="left:949px;top:814px" width="22" height="4" viewBox="0 0 22 4"><ellipse cx="11" cy="2" rx="10.5" ry="1.3" fill="#12300f" opacity="0.85"/></svg>
<svg style="left:816px;top:912px" width="14" height="21" viewBox="0 0 14 21"><path d="M11.8 2L2.2 10.5L11.8 19" fill="none" stroke="#4c4c4c" stroke-width="3.1" stroke-linecap="round" stroke-linejoin="round"/></svg>
</body></html>
